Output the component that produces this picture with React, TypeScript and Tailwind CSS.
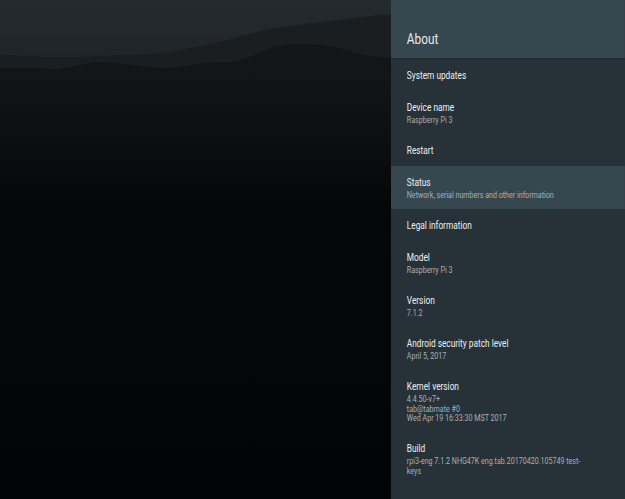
import React from "react";

type Item = { title: string; sub?: string[]; active?: boolean };

const items: Item[] = [
  { title: "System updates" },
  { title: "Device name", sub: ["Raspberry Pi 3"] },
  { title: "Restart" },
  { title: "Status", sub: ["Network, serial numbers and other information"], active: true },
  { title: "Legal information" },
  { title: "Model", sub: ["Raspberry Pi 3"] },
  { title: "Version", sub: ["7.1.2"] },
  { title: "Android security patch level", sub: ["April 5, 2017"] },
  { title: "Kernel version", sub: ["4.4.50-v7+", "tab@tabmate #0", "Wed Apr 19 16:33:30 MST 2017"] },
  { title: "Build", sub: ["rpi3-eng 7.1.2 NHG47K eng.tab.20170420.105749 test-keys"] },
];

function Backdrop() {
  return (
    <svg className="block h-full w-full" viewBox="0 0 391 499" preserveAspectRatio="none">
      <defs>
        <linearGradient id="low" x1="0" y1="0" x2="0" y2="499" gradientUnits="userSpaceOnUse">
          <stop offset="0" stopColor="#15191b" />
          <stop offset="0.16" stopColor="#121517" />
          <stop offset="0.24" stopColor="#0e1112" />
          <stop offset="0.32" stopColor="#0a0c0d" />
          <stop offset="0.4" stopColor="#060708" />
          <stop offset="1" stopColor="#030405" />
        </linearGradient>
        <linearGradient id="sky" x1="0" y1="0" x2="0" y2="60" gradientUnits="userSpaceOnUse">
          <stop offset="0" stopColor="#242b2f" />
          <stop offset="1" stopColor="#1f2427" />
        </linearGradient>
      </defs>
      <rect x="0" y="0" width="391" height="499" fill="url(#low)" />
      <path
        d="M0 0 H391 V58 C375 57 365 56 355 53 C340 46 320 44 300 44 C285 44 275 46 265 50 C250 57 240 62 225 62 C205 62 190 66 165 68 C145 67 125 63 100 62 C80 64 65 70 50 69 C30 67 15 68 0 68 Z"
        fill="#1a1e20"
      />
      <path
        d="M0 0 H391 V14 C370 16 350 18 330 21 C305 24 285 26 265 30 C240 36 220 42 200 46 C175 52 150 55 125 55 C95 56 70 58 45 57 C25 56 12 55 0 55 Z"
        fill="url(#sky)"
      />
    </svg>
  );
}

export default function App() {
  return (
    <div className="flex h-[499px] w-[625px] overflow-hidden bg-black">
      <div className="h-full w-[391px] shrink-0">
        <Backdrop />
      </div>
      <div className="h-full w-[234px] shrink-0 overflow-hidden bg-[#263238]">
        <div
          className="w-[296px] origin-top-left scale-x-[0.79]"
          style={{ fontFamily: "Roboto, 'Noto Sans', sans-serif" }}
        >
          <div className="h-[59px] border-b border-[#1f292e] bg-[#37474f] pl-[20px] pt-[30px] text-[15px] leading-[18px] text-[#e8eaeb]">
            About
          </div>
          {items.map((it) => (
            <div
              key={it.title}
              className={`pl-[20px] pr-[48px] pt-[9.5px] pb-[8.5px] ${it.active ? "bg-[#37474f]" : ""}`}
            >
              <div className="text-[10.5px] leading-[14px] text-[#eceff1]">{it.title}</div>
              {it.sub && (
                <div className="mt-[1.5px] text-[9px] leading-[9.5px] text-[#a9b0b4]">
                  {it.sub.map((s) => (
                    <div key={s}>{s}</div>
                  ))}
                </div>
              )}
            </div>
          ))}
        </div>
      </div>
    </div>
  );
}
